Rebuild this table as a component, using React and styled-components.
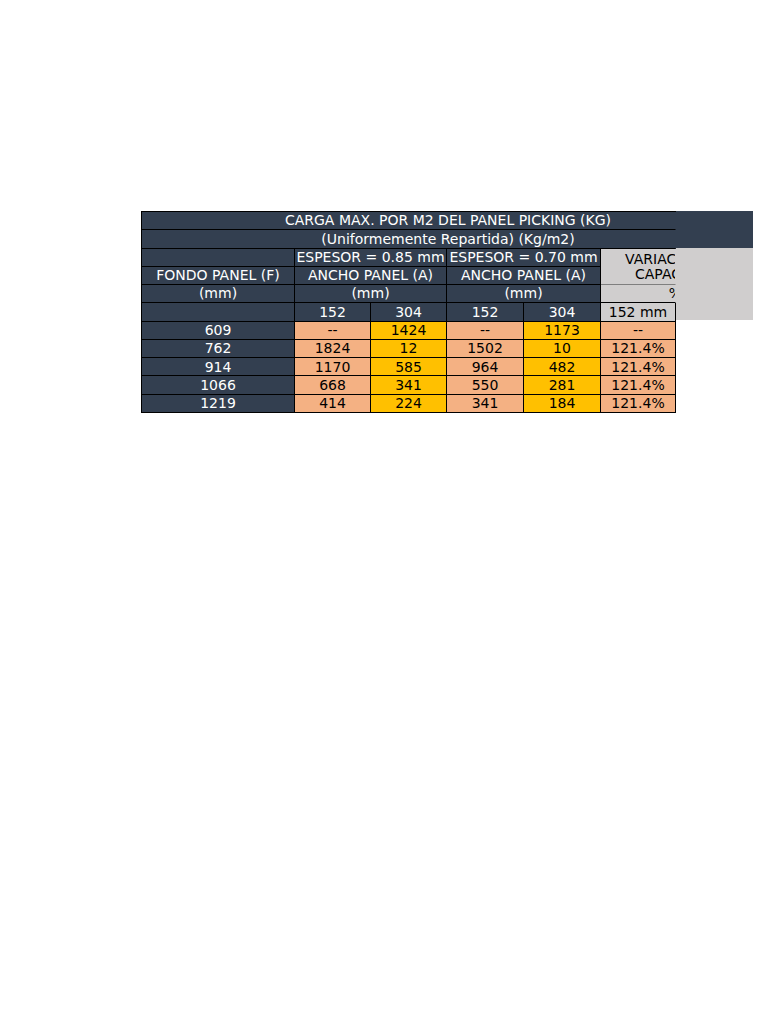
import React from "react";
import styled, { createGlobalStyle, css } from "styled-components";

const GlobalStyle = createGlobalStyle`
  html, body { margin: 0; padding: 0; background: #ffffff; }
  body { font-family: "DejaVu Sans", "Liberation Sans", sans-serif; }
`;

const DARK = "#333f50";
const GRAY = "#d0cece";
const SALMON = "#f4b183";
const GOLD = "#ffc000";

const Page = styled.div`
  padding: 211px 0 0 141px;
`;

const Sheet = styled.div`
  display: flex;
  align-items: flex-start;
`;

const Grid = styled.div`
  display: grid;
  grid-template-columns: 153px 76px 76px 77px 77px 75px;
  grid-auto-rows: 18.27px;
  border-top: 1px solid #000;
  border-left: 1px solid #000;
  font-size: 14px;
  line-height: 17px;
`;

const tones = {
  dark: css`background: ${DARK}; color: #ffffff;`,
  salmon: css`background: ${SALMON}; color: #000000;`,
  gold: css`background: ${GOLD}; color: #000000;`,
  gray: css`background: ${GRAY}; color: #000000;`,
};

const Cell = styled.div`
  box-sizing: border-box;
  display: flex;
  align-items: center;
  justify-content: center;
  padding-top: 0.5px;
  white-space: nowrap;
  min-width: 0;
  border-right: 1px solid #000;
  border-bottom: 1px solid ${(p) => p.$bottom || "#000"};
  grid-column: ${(p) => p.$col || "auto"};
  grid-row: ${(p) => p.$row || "auto"};
  ${(p) => tones[p.$tone || "dark"]}
  ${(p) => p.$noRight && p.$tone === "gray" && css`border-right-color: ${GRAY};`}
  ${(p) => p.$noRight && p.$tone === "dark" && css`border-right-color: ${DARK};`}
  ${(p) => p.$clip && css`overflow: hidden; justify-content: flex-start;`}
`;

const Wide = styled.span`
  display: block;
  flex: none;
  width: ${(p) => p.$w}px;
  text-align: center;
  line-height: 15px;
  white-space: pre-line;
`;

const Side = styled.div`
  display: flex;
  flex-direction: column;
  width: 77px;
`;

const SideBlock = styled.div`
  height: ${(p) => p.$h}px;
  background: ${(p) => (p.$tone === "gray" ? GRAY : DARK)};
`;

const rows = [
  ["609", "--", "1424", "--", "1173", "--"],
  ["762", "1824", "12", "1502", "10", "121.4%"],
  ["914", "1170", "585", "964", "482", "121.4%"],
  ["1066", "668", "341", "550", "281", "121.4%"],
  ["1219", "414", "224", "341", "184", "121.4%"],
];

const dataTones = ["dark", "salmon", "gold", "salmon", "gold", "salmon"];

export default function App() {
  return (
    <>
      <GlobalStyle />
      <Page>
        <Sheet>
          <Grid>
            <Cell $col="1 / 7" $tone="dark" $noRight $clip>
              <Wide $w={612}>CARGA MAX. POR M2 DEL PANEL PICKING (KG)</Wide>
            </Cell>
            <Cell $col="1 / 7" $tone="dark" $noRight $clip>
              <Wide $w={612}>(Uniformemente Repartida) (Kg/m2)</Wide>
            </Cell>

            <Cell $tone="dark" />
            <Cell $col="2 / 4" $tone="dark">ESPESOR = 0.85 mm</Cell>
            <Cell $col="4 / 6" $tone="dark">ESPESOR = 0.70 mm</Cell>
            <Cell $col="6" $row="3 / 5" $tone="gray" $noRight $clip $bottom="#7f7f7f">
              <Wide $w={149}>{"VARIACIÓN DE\nCAPACIDAD"}</Wide>
            </Cell>

            <Cell $col="1" $row="4" $tone="dark">FONDO PANEL (F)</Cell>
            <Cell $col="2 / 4" $row="4" $tone="dark">ANCHO PANEL (A)</Cell>
            <Cell $col="4 / 6" $row="4" $tone="dark">ANCHO PANEL (A)</Cell>

            <Cell $col="1" $row="5" $tone="dark">(mm)</Cell>
            <Cell $col="2 / 4" $row="5" $tone="dark">(mm)</Cell>
            <Cell $col="4 / 6" $row="5" $tone="dark">(mm)</Cell>
            <Cell $col="6" $row="5" $tone="gray" $noRight $clip>
              <Wide $w={149}>%</Wide>
            </Cell>

            <Cell $tone="dark" />
            <Cell $tone="dark">152</Cell>
            <Cell $tone="dark">304</Cell>
            <Cell $tone="dark">152</Cell>
            <Cell $tone="dark">304</Cell>
            <Cell $tone="gray">152 mm</Cell>

            {rows.map((r) =>
              r.map((v, i) => (
                <Cell key={r[0] + "-" + i} $tone={dataTones[i]}>
                  {v}
                </Cell>
              ))
            )}
          </Grid>
          <Side>
            <SideBlock $h={37} $tone="dark" />
            <SideBlock $h={72} $tone="gray" />
          </Side>
        </Sheet>
      </Page>
    </>
  );
}
